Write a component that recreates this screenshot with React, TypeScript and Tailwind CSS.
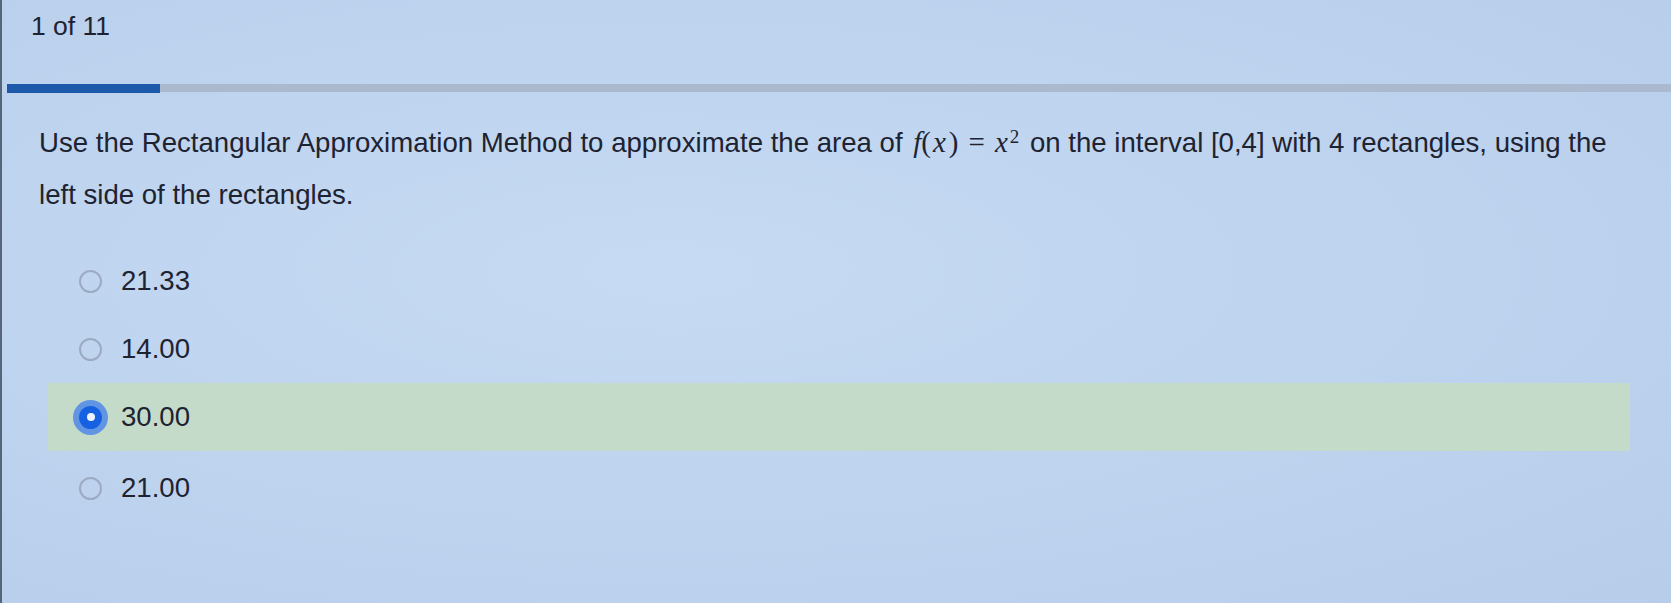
import React from 'react';

const options = [
  { id: 'a', label: '21.33' },
  { id: 'b', label: '14.00' },
  { id: 'c', label: '30.00' },
  { id: 'd', label: '21.00' },
];

const Radio = ({ checked }: { checked: boolean }) => {
  if (checked) {
    return (
      <span className="relative flex h-[23px] w-[23px] shrink-0 items-center justify-center rounded-full bg-[#1660e2] shadow-[0_0_0_6px_#6294e4]">
        <span className="h-[8px] w-[8px] rounded-full bg-[#eef4ff]" />
      </span>
    );
  }
  return <span className="h-[23px] w-[23px] shrink-0 rounded-full border-[2px] border-[#9cabc3]" />;
};

export default function App() {
  const selected = 'c';

  return (
    <div
      className="h-[603px] w-[1671px] overflow-hidden border-l-[2px] border-[#56657a] bg-[radial-gradient(ellipse_at_40%_45%,#c6daf3,#b7cdea)] pt-[10px] text-[#1e2331]"
      style={{ fontFamily: '"Liberation Sans", Arial, sans-serif' }}
    >
      {/* Header */}
      <div className="h-[32px] pl-[29px] text-[26.5px] leading-[32px]">1 of 11</div>

      {/* Progress */}
      <div className="ml-[5px] mt-[42px] flex h-[9px]">
        <div className="h-full w-[153px] bg-[#1c59ab]" />
        <div className="h-[8px] flex-1 bg-[#abb9cf]" />
      </div>

      {/* Question */}
      <div className="mt-[23px] pl-[37px] text-[27.6px] leading-[52px]">
        Use the Rectangular Approximation Method to approximate the area of{' '}
        <span
          className="whitespace-nowrap px-[3px] text-[29px]"
          style={{ fontFamily: '"Liberation Serif", "Times New Roman", serif' }}
        >
          <i>f</i>(<i className="pl-[2px] pr-[3px]">x</i>)<span className="mx-[10px]">=</span>
          <i>x</i>
          <sup className="pl-[2px] text-[19px]">2</sup>
        </span>{' '}
        on the interval [0,4] with 4 rectangles, using the
        <br />
        left side of the rectangles.
      </div>

      {/* Options */}
      <div className="ml-[46px] mt-[26px] flex w-[1582px] flex-col">
        {options.map((opt, i) => {
          const isSel = opt.id === selected;
          return (
            <div
              key={opt.id}
              className={`flex h-[68px] items-center gap-[19px] pl-[31px] text-[27.6px] ${isSel ? 'bg-[#c5dbc9]' : ''} ${i === 3 ? 'pt-[6px]' : ''}`}
            >
              <Radio checked={isSel} />
              <span>{opt.label}</span>
            </div>
          );
        })}
      </div>
    </div>
  );
}
